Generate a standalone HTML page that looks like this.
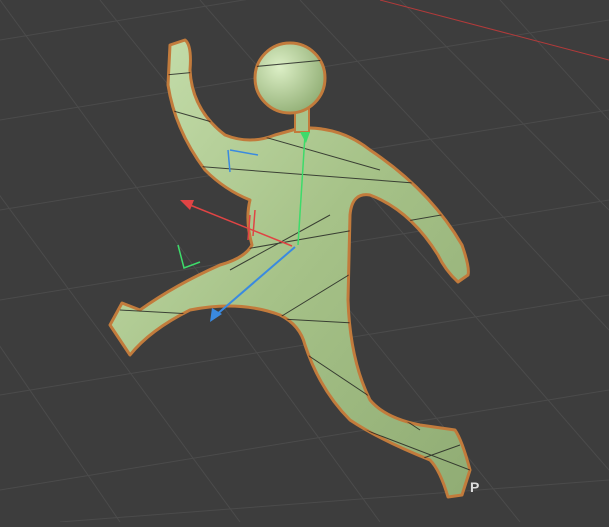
<!DOCTYPE html>
<html><head><meta charset="utf-8"><style>html,body{margin:0;padding:0;background:#3d3d3d;overflow:hidden}</style></head>
<body>
<svg width="609" height="522" viewBox="0 0 609 522" xmlns="http://www.w3.org/2000/svg">
<defs>
<linearGradient id="g" x1="0" y1="0" x2="1" y2="1">
<stop offset="0" stop-color="#c8e0ae"/><stop offset="0.5" stop-color="#a6c288"/><stop offset="1" stop-color="#90ac74"/>
</linearGradient>
<radialGradient id="h" cx="0.35" cy="0.35" r="0.7"><stop offset="0" stop-color="#dcefc6"/><stop offset="1" stop-color="#93b077"/></radialGradient>
<clipPath id="c"><path id="fig" d="M170,45 L185,40 Q192,45 190,70 Q192,110 225,135 Q250,145 275,135 L300,128 Q340,126 370,150 Q430,190 462,245 Q470,268 468,275 L458,282 Q445,270 438,255 Q410,210 370,195 Q352,192 350,215 L348,300 Q350,360 370,400 Q385,418 420,425 L455,430 Q462,440 470,470 L462,495 L448,497 Q440,470 430,460 Q380,440 350,420 Q320,390 305,345 Q300,325 280,315 Q240,300 190,310 Q150,330 130,355 L110,325 L122,303 L140,310 Q175,285 220,265 Q245,258 252,245 Q245,220 250,200 Q225,190 205,170 Q175,130 168,85 Z"/>
<circle cx="290" cy="78" r="35"/></clipPath>
</defs>
<rect width="609" height="522" fill="#3d3d3d"/>
<g stroke="#4b4b4b" stroke-width="1" fill="none">
<path d="M0,40 L609,-60 M0,120 L609,20 M0,210 L609,110 M0,300 L609,200 M0,395 L609,295 M0,490 L609,390 M60,522 L609,480"/>
<path d="M0,0 L380,522 M100,0 L520,522 M200,0 L609,470 M300,0 L609,330 M400,0 L609,210 M-100,60 L240,522 M-100,200 L120,522 M500,0 L609,120"/>
</g>
<line x1="380" y1="0" x2="609" y2="60" stroke="#b23a3a" stroke-width="1"/>
<path d="M170,45 L185,40 Q192,45 190,70 Q192,110 225,135 Q250,145 275,135 L300,128 Q340,126 370,150 Q430,190 462,245 Q470,268 468,275 L458,282 Q445,270 438,255 Q410,210 370,195 Q352,192 350,215 L348,300 Q350,360 370,400 Q385,418 420,425 L455,430 Q462,440 470,470 L462,495 L448,497 Q440,470 430,460 Q380,440 350,420 Q320,390 305,345 Q300,325 280,315 Q240,300 190,310 Q150,330 130,355 L110,325 L122,303 L140,310 Q175,285 220,265 Q245,258 252,245 Q245,220 250,200 Q225,190 205,170 Q175,130 168,85 Z" fill="url(#g)" stroke="#c27b3c" stroke-width="3" stroke-linejoin="round"/>
<rect x="295" y="108" width="14" height="24" fill="#a8c48c" stroke="#c27b3c" stroke-width="2"/>
<circle cx="290" cy="78" r="35" fill="url(#h)" stroke="#c27b3c" stroke-width="3"/>
<g stroke="#1e1e1e" stroke-width="1" fill="none" opacity="0.8" clip-path="url(#c)">
<path d="M165,75 L325,60 M170,110 L380,170 M180,165 L440,185 M240,250 L470,210 M230,270 L330,215 M120,310 L480,330 M210,360 L365,265 M270,330 L420,430 M300,405 L470,470 M390,470 L460,445"/>
</g>
<line x1="298" y1="245" x2="305" y2="135" stroke="#3ddb6a" stroke-width="1.5"/>
<polygon points="300,132 310,132 306,143" fill="#3ddb6a"/>
<line x1="292" y1="246" x2="190" y2="205" stroke="#e04444" stroke-width="1.5"/>
<polygon points="180,200 194,200 190,210" fill="#e04444"/>
<line x1="295" y1="247" x2="215" y2="316" stroke="#3a8ae0" stroke-width="2"/>
<polygon points="210,322 212,308 222,314" fill="#3a8ae0"/>
<path d="M228,150 L230,172 M230,150 L258,155" stroke="#3a8ae0" stroke-width="1.5" fill="none"/>
<path d="M178,245 L184,268 L200,262" stroke="#3ddb6a" stroke-width="1.5" fill="none"/>
<path d="M250,215 L248,240 M255,210 L253,236" stroke="#e04444" stroke-width="1.5" fill="none"/>
<text x="470" y="492" font-family="Liberation Sans, sans-serif" font-size="14" font-weight="bold" fill="#ddd">P</text>
</svg>
</body></html>
